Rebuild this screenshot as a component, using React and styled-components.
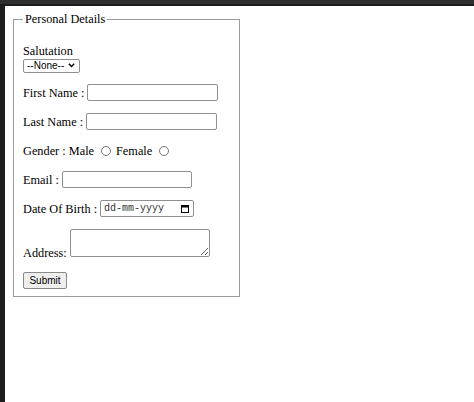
import React from 'react';
import styled, { createGlobalStyle } from 'styled-components';

const GlobalStyle = createGlobalStyle`
  html, body {
    margin: 0;
    padding: 0;
    background: #ffffff;
  }
`;

// editor chrome around the preview
const Page = styled.div`
  display: flex;
  flex-direction: column;
  width: 474px;
  height: 402px;
  overflow: hidden;
`;

const TopBar = styled.div`
  height: 4px;
  flex: none;
  background: #2f2f2f;
  border-bottom: 2px solid #1b1b1b;
`;

const Main = styled.div`
  display: flex;
  flex: 1;
`;

const SideStrip = styled.div`
  width: 5px;
  flex: none;
  background: #1e1e1e;
`;

const Preview = styled.div`
  flex: 1;
  background: #fff;
  padding: 6px 0 0 8px;
  font-family: "Liberation Serif", "Times New Roman", serif;
  font-size: 12.3px;
  color: #000;
`;

const Fieldset = styled.fieldset`
  box-sizing: border-box;
  width: 227px;
  margin: 0;
  padding: 18px 8px 7px 9px;
  border: 1px solid #9b9b9b;
  display: flex;
  flex-direction: column;
  gap: 12px;
`;

const Legend = styled.legend`
  padding: 0 2px;
  line-height: 14px;
  font-size: 12.3px;
`;

const Salutation = styled.div`
  display: flex;
  flex-direction: column;
  align-items: flex-start;
  line-height: 14px;
`;

const SelectWrap = styled.div`
  position: relative;
  width: 57px;
  height: 14px;
`;

const Select = styled.select`
  appearance: none;
  box-sizing: border-box;
  width: 57px;
  height: 14px;
  margin: 0;
  padding: 0 0 0 3px;
  font-family: "Liberation Sans", Arial, sans-serif;
  font-size: 10px;
  line-height: 12px;
  border: 1px solid #8f8f8f;
  border-radius: 2px;
  background: #fff;
  color: #000;
`;

const Chevron = styled.svg`
  position: absolute;
  right: 5px;
  top: 5px;
  pointer-events: none;
`;

const Row = styled.div`
  display: flex;
  align-items: ${p => (p.$bottom ? 'flex-end' : 'center')};
  gap: ${p => (p.$tight ? 0 : 3)}px;
  height: ${p => (p.$bottom ? 'auto' : '17px')};
  line-height: 14px;
  white-space: nowrap;
`;

const TextInput = styled.input`
  box-sizing: border-box;
  width: ${p => p.$w}px;
  height: 17px;
  margin: 0;
  padding: 0 2px;
  border: 1px solid #8f8f8f;
  border-radius: 2px;
  font-family: "Liberation Sans", Arial, sans-serif;
  font-size: 10px;
`;

const Radio = styled.input`
  width: 10px;
  height: 10px;
  margin: 0 5px 0 7px;
  accent-color: #767676;
`;

const DateBox = styled.div`
  box-sizing: border-box;
  width: 94px;
  height: 17px;
  display: flex;
  align-items: center;
  justify-content: space-between;
  padding: 0 4px 0 3px;
  border: 1px solid #8f8f8f;
  border-radius: 2px;
  font-family: "Liberation Mono", "Courier New", monospace;
  font-size: 10px;
  color: #333;
`;

const TextArea = styled.textarea`
  box-sizing: border-box;
  width: 140px;
  height: 28px;
  margin: 0 0 3px 0;
  border: 1px solid #8f8f8f;
  border-radius: 2px;
`;

const SubmitButton = styled.button`
  align-self: flex-start;
  box-sizing: border-box;
  width: 44px;
  height: 17px;
  padding: 0;
  font-family: "Liberation Sans", Arial, sans-serif;
  font-size: 10px;
  color: #000;
  background: #efefef;
  border: 1px solid #8a8a8a;
  border-radius: 2px;
`;

const CalendarIcon = () => (
  <svg width="8" height="8" viewBox="0 0 8 8">
    <rect x="0.5" y="0.5" width="7" height="7" fill="none" stroke="#000" strokeWidth="1" />
    <rect x="0" y="0" width="8" height="2.5" fill="#000" />
  </svg>
);

const App = () => (
  <Page>
    <GlobalStyle />
    <TopBar />
    <Main>
      <SideStrip />
      <Preview>
        <Fieldset>
          <Legend>Personal Details</Legend>
          <Salutation>
            Salutation
            <SelectWrap>
              <Select defaultValue="none">
                <option value="none">--None--</option>
                <option value="mr">Mr.</option>
                <option value="ms">Ms.</option>
              </Select>
              <Chevron width="7" height="5" viewBox="0 0 7 5">
                <path d="M0.8 0.8 L3.5 3.6 L6.2 0.8" fill="none" stroke="#000" strokeWidth="1.4" />
              </Chevron>
            </SelectWrap>
          </Salutation>
          <Row>
            First Name :
            <TextInput type="text" $w={131} />
          </Row>
          <Row>
            Last Name :
            <TextInput type="text" $w={131} />
          </Row>
          <Row $tight>
            Gender : Male
            <Radio type="radio" name="gender" />
            Female
            <Radio type="radio" name="gender" />
          </Row>
          <Row>
            Email :
            <TextInput type="text" $w={130} />
          </Row>
          <Row>
            Date Of Birth :
            <DateBox>
              <span>dd-mm-yyyy</span>
              <CalendarIcon />
            </DateBox>
          </Row>
          <Row $bottom>
            Address:
            <TextArea />
          </Row>
          <SubmitButton type="submit">Submit</SubmitButton>
        </Fieldset>
      </Preview>
    </Main>
  </Page>
);

export default App;
